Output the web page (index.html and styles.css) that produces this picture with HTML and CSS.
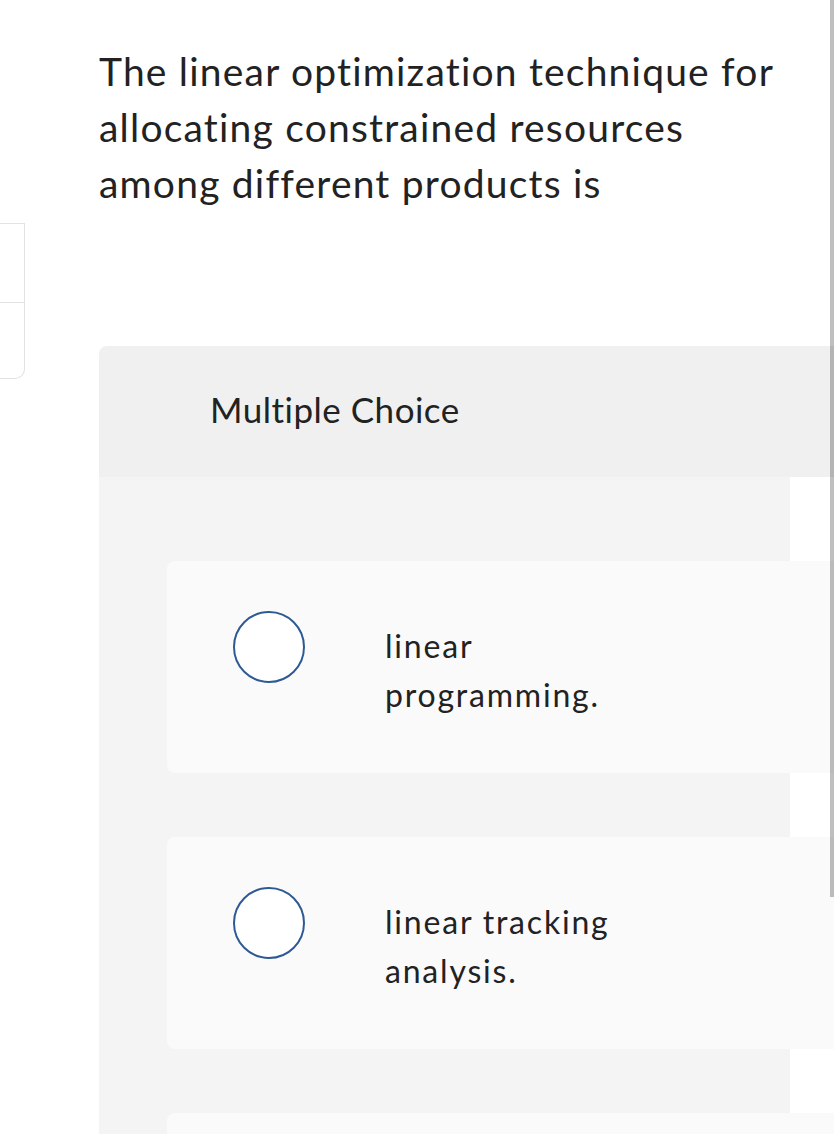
FILE: index.html
```html
<!DOCTYPE html>
<html>
<head>
<meta charset="utf-8">
<link rel="stylesheet" href="styles.css">
</head>
<body>
<div class="page">
  <aside class="rail">
    <div class="rail-cell"></div>
    <div class="rail-cell"></div>
  </aside>
  <main class="main">
    <p class="question">The linear optimization technique for allocating constrained resources among different products is</p>
    <section class="panel">
      <header class="panel-head">Multiple Choice</header>
      <div class="panel-body">
        <div class="option">
          <span class="radio"></span>
          <span class="label">linear programming.</span>
        </div>
        <div class="option">
          <span class="radio"></span>
          <span class="label">linear tracking analysis.</span>
        </div>
        <div class="option"></div>
      </div>
    </section>
  </main>
</div>
<div class="scrollbar"></div>
</body>
</html>
```
FILE: styles.css
```css
html, body {
  margin: 0;
  padding: 0;
  overflow: hidden;
  background: #fff;
  height: 1134px;
}
body {
  font-family: "Lato", "Open Sans", sans-serif;
  color: #222;
}
.page {
  display: flex;
  align-items: flex-start;
}
.rail {
  flex: none;
  width: 35px;
  margin-left: -10px;
  margin-top: 223px;
  border: 1px solid #e2e2e2;
  border-left: none;
  border-bottom-right-radius: 10px;
  box-sizing: border-box;
}
.rail-cell {
  height: 78px;
}
.rail-cell + .rail-cell {
  border-top: 1px solid #e2e2e2;
  height: 75px;
}
.main {
  flex: none;
  margin-left: 74px;
  width: 800px;
}
.question {
  margin: 0;
  padding-top: 43px;
  width: 700px;
  font-size: 39px;
  line-height: 56px;
  letter-spacing: 1.2px;
  color: #222;
}
.panel {
  margin-top: 135px;
}
.panel-head {
  background: #f0f0f0;
  border-top-left-radius: 8px;
  height: 131px;
  box-sizing: border-box;
  padding-left: 111px;
  padding-top: 43px;
  font-size: 35px;
  line-height: 40px;
  letter-spacing: 0.5px;
  color: #222;
}
.panel-body {
  width: 691px;
  background: #f4f4f4;
  padding-top: 84px;
  padding-left: 68px;
  box-sizing: border-box;
  display: flex;
  flex-direction: column;
  gap: 64px;
  height: 700px;
}
.option {
  flex: none;
  width: 720px;
  height: 212px;
  background: #fafafa;
  border-radius: 8px;
  display: flex;
  align-items: flex-start;
  box-sizing: border-box;
  padding-left: 66px;
  padding-top: 50px;
}
.radio {
  flex: none;
  width: 72px;
  height: 72px;
  border-radius: 50%;
  border: 2px solid #2d5a94;
  background: #fff;
  box-sizing: border-box;
}
.label {
  margin-left: 80px;
  margin-top: 10px;
  width: 250px;
  font-size: 32px;
  line-height: 49px;
  letter-spacing: 1.8px;
  color: #222;
}
.scrollbar {
  position: absolute;
  top: 0;
  right: 0;
  width: 4px;
  height: 897px;
  background: rgba(0, 0, 0, 0.25);
}
```
